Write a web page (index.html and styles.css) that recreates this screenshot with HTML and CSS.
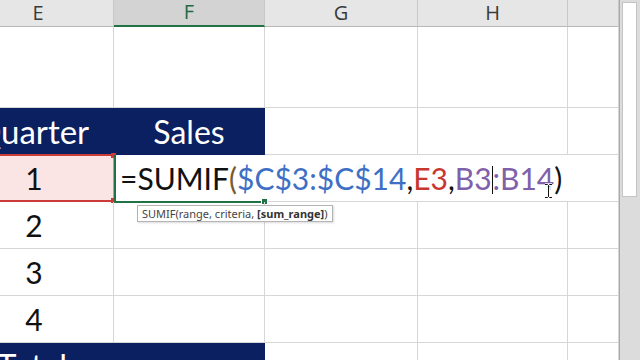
FILE: index.html
```html
<!DOCTYPE html>
<html>
<head>
<meta charset="utf-8">
<link rel="stylesheet" href="styles.css">
</head>
<body>
<div class="sheet">
  <div class="grid">
    <div class="ch">E</div>
    <div class="ch sel">F</div>
    <div class="ch">G</div>
    <div class="ch">H</div>
    <div class="ch"></div>

    <div class="c"></div><div class="c"></div><div class="c"></div><div class="c"></div><div class="c"></div>

    <div class="c navy first">Quarter</div>
    <div class="c navy">Sales</div>
    <div class="c"></div><div class="c"></div><div class="c"></div>

    <div class="c num refred">1<i class="knob k-top"></i><i class="knob k-bot"></i></div>
    <div class="edit">
      <span class="active"><i class="fill"></i></span>
      <span class="formula">=SUMIF<span class="paren">(</span><span class="r-blue">$C$3:$C$14</span>,<span class="r-red">E3</span>,<span class="r-purple">B3<span class="caret"></span>:B14</span>)</span>
    </div>

    <div class="c num">2</div><div class="c"></div><div class="c"></div><div class="c"></div><div class="c"></div>
    <div class="c num">3</div><div class="c"></div><div class="c"></div><div class="c"></div><div class="c"></div>
    <div class="c num">4</div><div class="c"></div><div class="c"></div><div class="c"></div><div class="c"></div>

    <div class="c navy first total">Total</div>
    <div class="c navy"></div>
    <div class="c"></div><div class="c"></div><div class="c"></div>
  </div>
  <div class="vscroll"><div class="thumb"></div></div>

  <div class="tip">SUMIF(range, criteria, <b>[sum_range]</b>)</div>
  <svg class="ibeam" width="9" height="16" viewBox="0 0 9 16">
    <path d="M1 1.5h2.5l1 1 1-1H8M4.5 2.5v11M1 14.5h2.5l1-1 1 1H8" fill="none" stroke="#fff" stroke-width="2.6"/>
    <path d="M1 1.5h2.5l1 1 1-1H8M4.5 2.5v11M1 14.5h2.5l1-1 1 1H8" fill="none" stroke="#111" stroke-width="1"/>
  </svg>
</div>
</body>
</html>
```

FILE: styles.css
```css
html, body {
  margin: 0;
  padding: 0;
  background: #ffffff;
}

.sheet {
  position: relative;
  width: 640px;
  height: 360px;
  overflow: hidden;
  display: flex;
}

.grid {
  flex: none;
  margin-left: -37px;
  display: grid;
  grid-template-columns: 151px 151px 153px 150px 51px;
  grid-template-rows: 27px 81px 47px 47px 47px 47px 47px 47px;
  font-family: "Lato", "Open Sans", sans-serif;
}

.ch {
  box-sizing: border-box;
  background: #e6e6e6;
  border-right: 1px solid #c8c8c8;
  border-bottom: 1px solid #b9b9b9;
  display: flex;
  align-items: center;
  justify-content: center;
  font-family: "Open Sans", "Noto Sans", sans-serif;
  font-size: 20px;
  line-height: 1;
  color: #3a3a3a;
  padding-bottom: 1px;
}

.ch.sel {
  background: #d3d3d3;
  color: #1f6b43;
  border-bottom: 2px solid #217346;
}

.c {
  position: relative;
  box-sizing: border-box;
  border-right: 1px solid #d6d6d6;
  border-bottom: 1px solid #d6d6d6;
  display: flex;
  align-items: center;
  justify-content: center;
  font-size: 30px;
  color: #111;
}

.num {
  padding-right: 8px;
}

.navy {
  background: #0b2060;
  color: #ffffff;
  font-size: 32px;
  border-right-color: #0b2060;
  border-bottom-color: #0b2060;
}

.navy.first {
  font-size: 33px;
  padding-right: 12px;
}

.total {
  align-items: flex-start;
  padding-top: 2px;
}

.refred {
  background: #fbe4e4;
  border-top: 2px solid #cd3b38;
  border-bottom: 2px solid #cd3b38;
  border-right: 1px solid #e08a88;
  margin-top: -1px;
}

.knob {
  position: absolute;
  right: -3px;
  width: 5px;
  height: 5px;
  background: #cd3b38;
}
.k-top { top: -3px; }
.k-bot { bottom: -3px; }

.edit {
  grid-column: 2 / 6;
  position: relative;
  box-sizing: border-box;
  background: #fff;
  border-right: 1px solid #d6d6d6;
  border-bottom: 1px solid #d6d6d6;
  display: flex;
  align-items: center;
  padding-left: 6px;
}

.active {
  position: absolute;
  left: 0;
  top: 0;
  width: 151px;
  height: 48px;
  box-sizing: border-box;
  border-left: 2px solid #217346;
  border-bottom: 2px solid #217346;
}

.fill {
  position: absolute;
  right: -3px;
  bottom: -4px;
  width: 5px;
  height: 5px;
  background: #217346;
  border: 1px solid #fff;
}

.formula {
  font-size: 30px;
  color: #111;
  white-space: nowrap;
  line-height: 1;
}

.paren { color: #7a5a2e; }
.r-blue { color: #3e6fc5; }
.r-red { color: #c8372f; }
.r-purple { color: #7f61ab; }

.caret {
  display: inline-block;
  width: 0;
  height: 28px;
  border-left: 1px solid #111;
  vertical-align: -4px;
}

.vscroll {
  flex: none;
  width: 21px;
  height: 360px;
  box-sizing: border-box;
  background: #dcdcdc;
  border-left: 1px solid #a9a9a9;
  padding: 2px 3px 0 2px;
}

.thumb {
  height: 195px;
  background: #ffffff;
  border: 1px solid #c4c4c4;
  box-sizing: border-box;
}

.tip {
  position: absolute;
  left: 137px;
  top: 205px;
  height: 17px;
  box-sizing: border-box;
  padding: 0 4px;
  background: #fff;
  border: 1px solid #b4b4b4;
  box-shadow: 1px 1px 2px rgba(0,0,0,0.15);
  font-family: "Noto Sans", "Open Sans", sans-serif;
  font-size: 11px;
  line-height: 15px;
  color: #444;
  white-space: nowrap;
}

.tip b { color: #333; }

.ibeam {
  position: absolute;
  left: 544px;
  top: 183px;
}
```
